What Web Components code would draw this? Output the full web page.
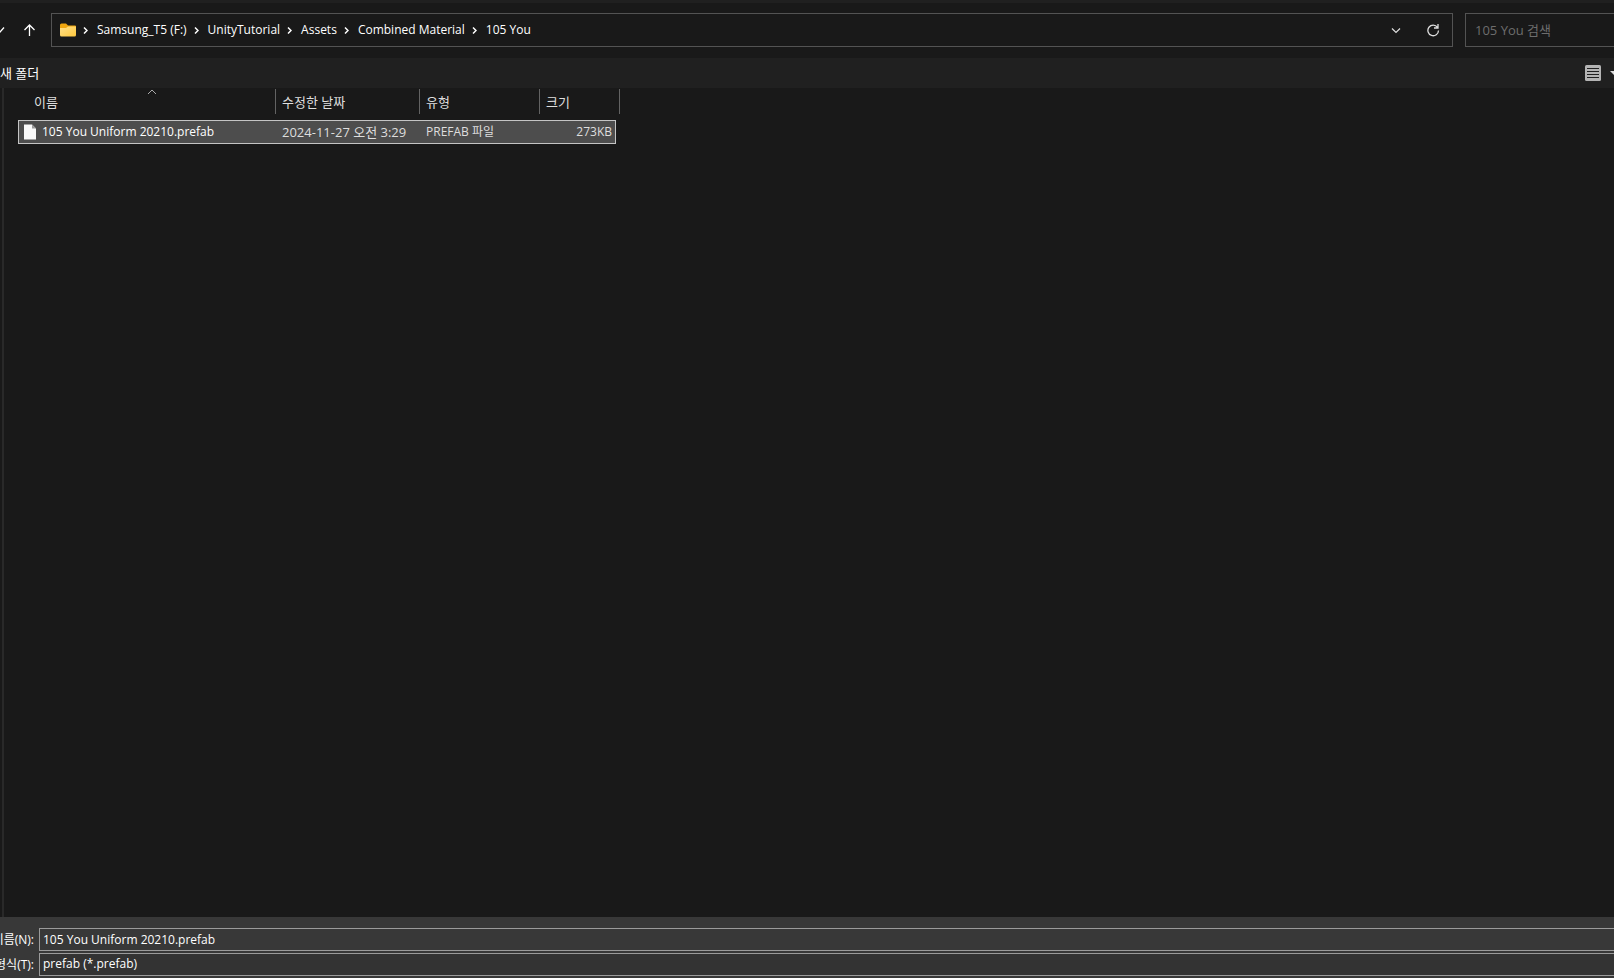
<!DOCTYPE html>
<html lang="ko">
<head>
<meta charset="UTF-8">
<meta name="viewport" content="width=device-width, initial-scale=1">
<title>105 You</title>
<style>
    html, body {
        height: 100%;
    }
    body {
        margin: 0;
        overflow: hidden;
        background: #191919;
        color: #fff;
        font: 12px/16px "Open Sans", "Noto Sans CJK KR", sans-serif;
    }
</style>
</head>
<body>
<file-dialog>
    <address-bar slot="address">
        <path-crumb>Samsung_T5 (F:)</path-crumb>
        <path-crumb>UnityTutorial</path-crumb>
        <path-crumb>Assets</path-crumb>
        <path-crumb>Combined Material</path-crumb>
        <path-crumb>105 You</path-crumb>
    </address-bar>
    <command-bar slot="commands">새 폴더</command-bar>
    <file-list slot="files"></file-list>
    <name-panel slot="footer"></name-panel>
</file-dialog>

<script>
class BaseElement extends HTMLElement {
    constructor() {
        super()
        this.attachShadow({mode: 'open'})
    }

    connectedCallback() {
        this.shadowRoot.innerHTML = `
        <style>
            * { box-sizing: border-box; }
            button, input, select {
                margin: 0;
                padding: 0;
                border: 0;
                border-radius: 0;
                background: none;
                color: inherit;
                font: inherit;
            }
            svg { display: block; flex: none; }
        </style>
        ` + this.template()
    }
}

class FileDialog extends BaseElement {
    template() {
        return `
        <style>
            :host {
                display: flex;
                flex-direction: column;
                height: 100%;
                border-top: 3px solid #202020;
                box-sizing: border-box;
            }
            main {
                flex: 1;
                min-height: 0;
                display: flex;
                padding-left: 2px;
            }
            aside {
                width: 2px;
                background: #292929;
            }
        </style>
        <slot name="address"></slot>
        <slot name="commands"></slot>
        <main>
            <aside></aside>
            <slot name="files"></slot>
        </main>
        <slot name="footer"></slot>
        `
    }
}

class AddressBar extends BaseElement {
    template() {
        return `
        <style>
            :host {
                display: flex;
                align-items: center;
                flex: none;
                padding: 10px 0 11px;
                overflow: hidden;
            }
            .recent { margin-left: -6px; }
            .up { margin: 0 15px 0 16px; }
            nav {
                flex: 1;
                display: flex;
                align-items: center;
                height: 34px;
                padding: 0 12px 0 8px;
                border: 1px solid #535353;
            }
            nav button + button { margin-left: 25px; }
            .crumbs {
                flex: 1;
                display: flex;
                align-items: center;
            }
            .search {
                width: 192px;
                height: 34px;
                margin: 0 -43px 0 12px;
                padding: 0 9px;
                border: 1px solid #535353;
                outline: none;
                font-size: 13px;
            }
            .search::placeholder { color: #6d6d6d; opacity: 1; }
        </style>
        <button class="recent" aria-label="최근 위치">
            <svg width="12" height="12" fill="none" stroke="#fff" stroke-width="1.3"><path d="M2 4l4 4 4-4.500"/></svg>
        </button>
        <button class="up" aria-label="위로">
            <svg width="14" height="14" fill="none" stroke="#fff" stroke-width="1.3"><path d="M7.500 13V2M2.500 7l5-5 5 5"/></svg>
        </button>
        <nav>
            <svg width="16" height="14" viewBox="0 0 16 14">
                <defs><linearGradient id="g" x1="0" y1="0" x2="1" y2="1"><stop stop-color="#ffe08a"/><stop offset="1" stop-color="#ffc83d"/></linearGradient></defs>
                <path d="M0 2q0-1.500 1.500-1.500H6l2 2h7q1 0 1 1V7H0z" fill="#f0a60f"/>
                <path d="M0 5h6l2-1.500h8V12q0 1.500-1.500 1.500h-13Q0 13.500 0 12z" fill="url(#g)"/>
            </svg>
            <div class="crumbs"><slot></slot></div>
            <button aria-label="이전 위치">
                <svg width="10" height="10" fill="none" stroke="#ddd" stroke-width="1.200"><path d="M1 3.500l4 4 4-4"/></svg>
            </button>
            <button aria-label="새로 고침">
                <svg width="14" height="14" fill="none" stroke="#ddd" stroke-width="1.300"><path d="M11.500 4.300A5.300 5.300 0 1 0 12.500 7.500M12 1v4H8"/></svg>
            </button>
        </nav>
        <input class="search" type="search" placeholder="105 You 검색" aria-label="105 You 검색">
        `
    }
}

class PathCrumb extends BaseElement {
    template() {
        return `
        <style>
            :host {
                display: flex;
                align-items: center;
                gap: 9px;
                padding-left: 7px;
            }
            a {
                color: inherit;
                text-decoration: none;
                white-space: nowrap;
            }
        </style>
        <svg width="5" height="8" fill="none" stroke="#fff" stroke-width="1.500"><path d="M1 1.500L4 4.500 1 7.500"/></svg>
        <a href="#"><slot></slot></a>
        `
    }
}

class CommandBar extends BaseElement {
    template() {
        return `
        <style>
            :host {
                display: flex;
                align-items: center;
                flex: none;
                height: 30px;
                background: #202020;
                font-size: 13px;
                overflow: hidden;
            }
            .view {
                display: flex;
                align-items: center;
                gap: 9px;
                margin: 0 -4px 0 auto;
            }
        </style>
        <button><slot></slot></button>
        <button class="view" aria-label="보기">
            <svg width="16" height="16"><rect width="16" height="16" rx="1.500" fill="#b4b4b4"/><path d="M2 3.500h12M2 6.500h12M2 9.500h12M2 12.500h12" stroke="#202020"/></svg>
            <svg width="8" height="4"><path d="M0 0h8L4 4z" fill="#ddd"/></svg>
        </button>
        `
    }
}

class FileList extends BaseElement {
    template() {
        return `
        <style>
            :host {
                flex: 1;
                padding: 1px 0 0 14px;
            }
            table {
                width: 602px;
                table-layout: fixed;
                border-collapse: separate;
                border-spacing: 0;
            }
            th, td {
                padding: 0;
                text-align: left;
                font-weight: normal;
                white-space: nowrap;
            }
            th {
                height: 31px;
                vertical-align: top;
                color: #dedede;
                font-size: 13px;
            }
            th div {
                display: flex;
                align-items: center;
                height: 25px;
                padding-left: 6px;
                border-right: 1px solid #636363;
            }
            th:first-child div {
                display: grid;
                grid-template-columns: 1fr 10px 1fr;
                padding: 0 6px 0 16px;
            }
            th:first-child svg { align-self: start; }
            td {
                height: 24px;
                padding-left: 6px;
                background: #4d4d4d;
                border: solid #c4c4c4;
                border-width: 1px 0;
                color: #dedede;
            }
            td:first-child {
                padding-left: 5px;
                border-left-width: 1px;
                color: #fff;
            }
            .date { font-size: 13px; }
            td:nth-child(4) {
                padding-right: 3px;
                border-right-width: 1px;
                text-align: right;
            }
            td:last-child {
                background: none;
                border: 0;
                padding: 0;
            }
            .name {
                display: flex;
                align-items: center;
                gap: 6px;
            }
        </style>
        <table>
            <colgroup><col style="width: 258px"><col style="width: 144px"><col style="width: 120px"><col style="width: 76px"><col style="width: 4px"></colgroup>
            <thead>
                <tr>
                    <th aria-sort="ascending"><div>이름<svg width="10" height="6" fill="none" stroke="#aaa"><path d="M1 5l4-4 4 4"/></svg></div></th>
                    <th><div>수정한 날짜</div></th>
                    <th><div>유형</div></th>
                    <th colspan="2"><div>크기</div></th>
                </tr>
            </thead>
            <tbody>
                <tr>
                    <td><div class="name"><svg width="12" height="16"><path d="M0 .5h8l4 4v11H0z" fill="#fafafa"/><path d="M8 .5v4h4z" fill="#999"/></svg>105 You Uniform 20210.prefab</div></td>
                    <td class="date">2024-11-27 오전 3:29</td>
                    <td>PREFAB 파일</td>
                    <td>273KB</td>
                    <td></td>
                </tr>
            </tbody>
        </table>
        `
    }
}

class NamePanel extends BaseElement {
    template() {
        return `
        <style>
            :host {
                flex: none;
                display: flex;
                flex-direction: column;
                gap: 2px;
                padding: 11px 0 2px;
                background: #383838;
                overflow: hidden;
            }
            .row {
                display: flex;
                align-items: center;
                height: 23px;
            }
            label {
                display: flex;
                justify-content: flex-end;
                width: 34px;
                margin-right: 5px;
                white-space: nowrap;
            }
            input, select {
                flex: 1;
                height: 23px;
                margin-right: -2px;
                padding: 0 3px 1px;
                border: 1px solid #9b9b9b;
                outline: none;
                appearance: none;
            }
            select { background: #333; }
        </style>
        <div class="row">
            <label for="name">파일 이름(N):</label>
            <input id="name" type="text" value="105 You Uniform 20210.prefab">
        </div>
        <div class="row">
            <label for="type">파일 형식(T):</label>
            <select id="type"><option>prefab (*.prefab)</option></select>
        </div>
        `
    }
}

customElements.define('file-dialog', FileDialog)
customElements.define('address-bar', AddressBar)
customElements.define('path-crumb', PathCrumb)
customElements.define('command-bar', CommandBar)
customElements.define('file-list', FileList)
customElements.define('name-panel', NamePanel)
</script>
</body>
</html>
